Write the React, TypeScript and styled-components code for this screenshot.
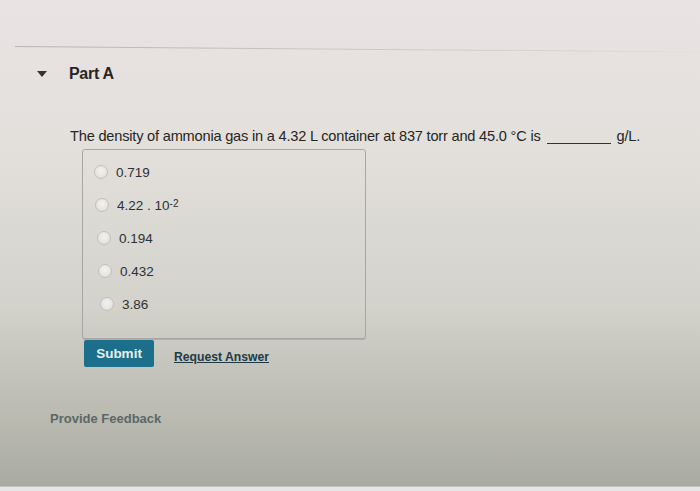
import React from "react";
import styled, { createGlobalStyle } from "styled-components";

const Global = createGlobalStyle`
  html, body { margin: 0; padding: 0; }
  body {
    width: 700px; height: 491px; overflow: hidden;
    font-family: "Liberation Sans", Arial, Helvetica, sans-serif;
    background: linear-gradient(180deg, #e9e3e3 0%, #e3e0dc 30%, #d3d2cb 62%, #b9b9b0 86%, #a9aaa2 99%, #e6e6e6 99.2%);
  }
`;

const Page = styled.div`
  width: 700px;
  height: 491px;
  display: flex;
  flex-direction: column;
`;

const TopRule = styled.div`
  margin: 46px 0 0 15px;
  height: 1px;
  background: linear-gradient(90deg, #b9b4b4, #cfcaca 60%, rgba(220,216,216,0.3));
  transform: rotate(0.45deg);
  transform-origin: left;
`;

const PartHeader = styled.div`
  display: flex;
  align-items: center;
  gap: 22px;
  padding: 17px 0 0 37px;
  height: 20px;
`;

const Caret = styled.span`
  width: 0; height: 0;
  border-left: 5px solid transparent;
  border-right: 5px solid transparent;
  border-top: 6px solid #333;
`;

const PartTitle = styled.h2`
  margin: 0;
  font-size: 16px;
  font-weight: 700;
  color: #262626;
  letter-spacing: -0.3px;
`;

const Body = styled.div`
  padding: 44px 0 0 70px;
  display: flex;
  flex-direction: column;
`;

const Question = styled.p`
  margin: 0;
  font-size: 14.6px;
  color: #252525;
  letter-spacing: -0.2px;
  display: flex;
  align-items: flex-end;
`;

const Blank = styled.span`
  display: inline-block;
  width: 64px;
  border-bottom: 1px solid #333;
  margin: 0 6px 0 6px;
  height: 12px;
`;

const Choices = styled.div`
  margin: 5px 0 0 12px;
  width: 284px;
  height: 190px;
  border: 1px solid #a9a6a2;
  border-radius: 3px;
  box-sizing: border-box;
  padding: 13px 0 0 11px;
  display: flex;
  flex-direction: column;
  gap: 15px;
  box-shadow: 0 1px 0 rgba(90,90,80,0.25);
`;

const Choice = styled.label<{ $shift: number }>`
  display: flex;
  align-items: center;
  gap: 8px;
  padding-left: ${(p) => p.$shift}px;
  height: 18px;
  font-size: 13.5px;
  color: #303030;
`;

const Radio = styled.span`
  width: 14px;
  height: 14px;
  border-radius: 50%;
  border: 1px solid #c2c0bc;
  background: radial-gradient(circle at 50% 40%, #f4f2f0, #dedbd6);
  box-sizing: border-box;
`;

const Sup = styled.sup`
  font-size: 10px;
  vertical-align: 3px;
`;

const Actions = styled.div`
  margin: 1px 0 0 14px;
  display: flex;
  align-items: center;
  gap: 20px;
`;

const SubmitButton = styled.button`
  width: 70px;
  height: 27px;
  background: #1c6f8a;
  color: #e8f0f2;
  border: none;
  border-radius: 2px;
  font-family: inherit;
  font-weight: 700;
  font-size: 13.5px;
  padding: 0;
`;

const RequestLink = styled.a`
  color: #203a48;
  font-weight: 700;
  font-size: 12.2px;
  text-decoration: underline;
  margin-top: 6px;
`;

const Feedback = styled.a`
  margin: 44px 0 0 50px;
  font-size: 13px;
  font-weight: 700;
  color: #5b6866;
`;

const choices = [
  { label: "0.719", shift: 0 },
  { label: "4.22 . 10", sup: "-2", shift: 1 },
  { label: "0.194", shift: 3 },
  { label: "0.432", shift: 4 },
  { label: "3.86", shift: 6 },
];

export default function App() {
  return (
    <Page>
      <Global />
      <TopRule />
      <PartHeader>
        <Caret />
        <PartTitle>Part A</PartTitle>
      </PartHeader>
      <Body>
        <Question>
          The density of ammonia gas in a 4.32 L container at 837 torr and 45.0 °C is
          <Blank />
          g/L.
        </Question>
        <Choices>
          {choices.map((c) => (
            <Choice key={c.label} $shift={c.shift}>
              <Radio />
              <span>
                {c.label}
                {c.sup && <Sup>{c.sup}</Sup>}
              </span>
            </Choice>
          ))}
        </Choices>
        <Actions>
          <SubmitButton>Submit</SubmitButton>
          <RequestLink>Request Answer</RequestLink>
        </Actions>
      </Body>
      <Feedback>Provide Feedback</Feedback>
    </Page>
  );
}
